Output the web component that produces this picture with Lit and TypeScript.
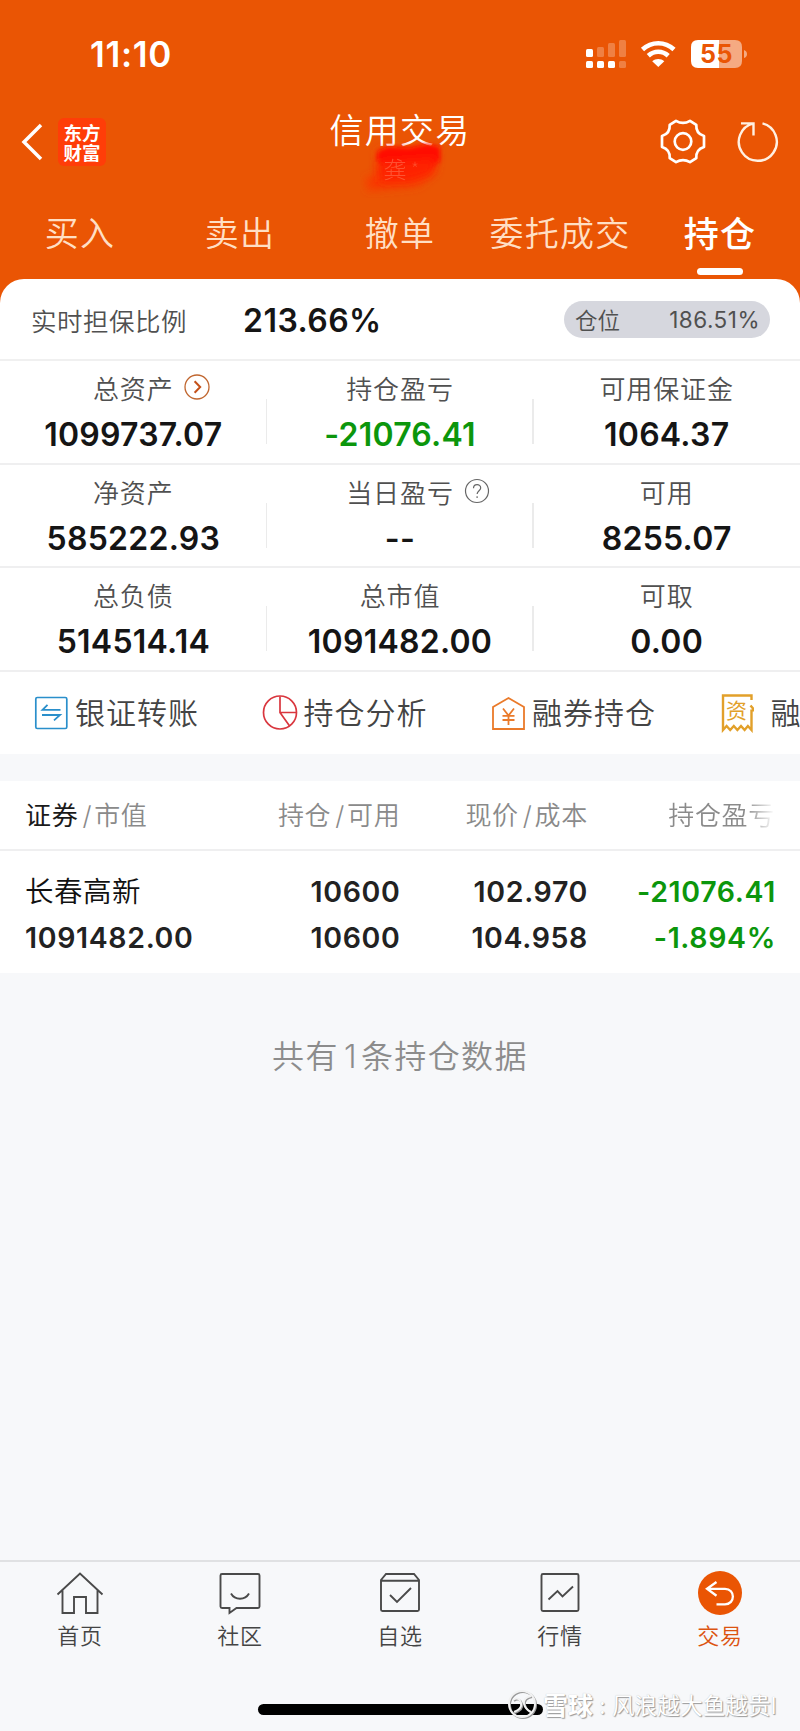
import { LitElement, html, css, svg } from "lit";
import { customElement } from "lit/decorators.js";
import { classMap } from "lit/directives/class-map.js";

const TABS = ["买入", "卖出", "撤单", "委托成交", "持仓"];

type Metric = { label: string; value: string; hint?: "go" | "help"; loss?: boolean };
const METRICS: Metric[][] = [
  [
    { label: "总资产", value: "1099737.07", hint: "go" },
    { label: "持仓盈亏", value: "-21076.41", loss: true },
    { label: "可用保证金", value: "1064.37" },
  ],
  [
    { label: "净资产", value: "585222.93" },
    { label: "当日盈亏", value: "--", hint: "help" },
    { label: "可用", value: "8255.07" },
  ],
  [
    { label: "总负债", value: "514514.14" },
    { label: "总市值", value: "1091482.00" },
    { label: "可取", value: "0.00" },
  ],
];

const goIcon = svg`<svg width="26" height="26" viewBox="0 0 26 26" fill="none" stroke="#c0662f">
  <circle cx="13" cy="13" r="12" stroke-width="1.3"/>
  <path d="M10.600 7.200 16.200 13l-5.600 5.800" stroke="#c4511a" stroke-width="2"/></svg>`;
const helpIcon = svg`<svg width="26" height="26" viewBox="0 0 26 26" fill="none" stroke="#666" stroke-width="1.200">
  <circle cx="13" cy="13" r="11.500"/>
  <path d="M9.500 10.200c0-4.800 7.200-4.800 7.200-.3 0 2.700-3.600 3-3.600 6.200M13.100 18.200v1.700"/></svg>`;

const transferIcon = svg`<svg width="35" height="36" viewBox="-1 0 35 36" fill="none" stroke="#2a8fcb">
  <rect x="1.800" y="2.500" width="31" height="31" rx="1.500" stroke-width="1.700"/>
  <path d="M26.500 14.800H8.500l5-5M8 20h18l-6 5.300" stroke-width="1.800"/></svg>`;
const pieIcon = svg`<svg width="36" height="36" viewBox="0 0 36 36" fill="none" stroke="#d9363e" stroke-width="1.700">
  <circle cx="18" cy="17.500" r="16.500"/><path d="M18 1.500v16h16.500M18 17.500l9.600 13.600"/></svg>`;
const houseIcon = svg`<svg width="35" height="36" viewBox="-1.500 0 35 36" fill="none" stroke="#ea7a2a" stroke-width="1.800">
  <path d="M1.500 12 17 3l15.500 9v22h-31z"/>
  <path d="m11.500 13.500 5.500 7 5.500-7M17 20.500V30M11 20.900h12M11 25h12"/></svg>`;
const billIcon = svg`<svg width="35" height="40" viewBox="-1 0 35 40" fill="none" stroke="#e2a02a" stroke-width="2.400">
  <path d="M31.500 7V2.500H3V37l3.600-4 3.600 4 3.600-4 3.600 4 3.600-4 3.600 4 3.300-4 3.600 4V16.500M30.500 12.500l2.500 3v3"/>
  <text x="17" y="25" text-anchor="middle" class="bill">资</text></svg>`;

const LINKS = [
  { icon: transferIcon, label: "银证转账" },
  { icon: pieIcon, label: "持仓分析" },
  { icon: houseIcon, label: "融券持仓" },
  { icon: billIcon, label: "融资持仓", wide: true },
];

const NAV = [
  { label: "首页", icon: svg`<path d="M1.500 23.500 24 2.500l22.500 21M6.500 19.500V42H18V26h12v16h11.500V19.500"/>` },
  { label: "社区", icon: svg`<path d="M6 3h36q1.500 0 1.500 1.500v31q0 1.500-1.500 1.500H20.500l-7 5v-5H6q-1.500 0-1.500-1.500v-31Q4.500 3 6 3zM15 22.500c4 7 14 7 18 0"/>` },
  { label: "自选", icon: svg`<path d="M10 3h28l5 6v29.500q0 1.500-1.500 1.500h-35Q5 40 5 38.500V9zM5 9.800h38M14 24l7 7 14-14"/>` },
  { label: "行情", icon: svg`<rect x="5.500" y="3" width="37" height="37" rx="1.500"/><path d="m12.500 28.500 9-8.500 5 5.500 10.500-10"/>` },
];

@customElement("status-bar")
class StatusBar extends LitElement {
  static styles = css`
    :host { display: flex; height: 107px; margin-bottom: -1px; align-items: center; justify-content: space-between; padding: 0 53px 0 90px; color: #fff; }
    .time { font-size: 35px; font-weight: 600; letter-spacing: 0.700px; }
    .pct { font: 700 25px Inter, sans-serif; fill: #ea5504; letter-spacing: 0.600px; }
  `;
  render() {
    return html`<span class="time">11:10</span>
      <svg width="162" height="34" viewBox="0 0 162 34" fill="#fff">
        <rect x="1" y="12" width="7" height="8" rx="1.500"/>
        <g opacity=".25"><rect x="12" y="10" width="7" height="10" rx="1.500"/><rect x="23" y="6" width="7" height="14" rx="1.500"/><rect x="34" y="3" width="7" height="17" rx="1.500"/><rect x="34" y="24" width="7" height="7" rx="1.500"/></g>
        <rect x="1" y="24" width="7" height="7" rx="1.500"/><rect x="12" y="24" width="7" height="7" rx="1.500"/><rect x="23" y="24" width="7" height="7" rx="1.500"/>
        <g fill="none" stroke="#fff" stroke-width="4.600"><path d="M57.500 12.500c9-8.400 22.500-8.400 31.500 0"/><path d="M63.300 18.700c5.800-5.300 14.100-5.300 19.900 0"/></g>
        <path d="M67.200 24.300c3.400-3 8.700-3 12.100 0l-6 5.800z"/>
        <path d="M113 3h21v28h-21q-7 0-7-7V10q0-7 7-7z"/>
        <path opacity=".5" d="M134 3h16q7 0 7 7v14q0 7-7 7h-16zM159 13q3 1 3 4t-3 4z"/>
        <text x="131.500" y="26" text-anchor="middle" class="pct">55</text>
      </svg>`;
  }
}

@customElement("title-bar")
class TitleBar extends LitElement {
  static styles = css`
    :host { display: grid; grid-template-columns: 1fr auto 1fr; height: 72px; align-items: center; color: #fff; }
    .left { display: flex; align-items: center; padding-left: 20px; gap: 14px; }
    .logo { display: grid; grid-auto-rows: 20.500px; place-content: center; width: 48px; height: 48px; border-radius: 6px; background: #ff3d08; font: 700 18.500px/20.500px "Noto Sans CJK SC", sans-serif; text-align: center; }
    .mid { position: relative; height: 72px; }
    .title { font-size: 34px; font-weight: 350; letter-spacing: 1.200px; line-height: 46px; padding-top: 2px; display: block; }
    .smear { position: absolute; left: 30px; top: 28px; }
    .masked { font: 300 23px "Noto Sans CJK SC", sans-serif; fill: #ff7a5a; }
    .star { font-size: 18px; }
    .right { display: flex; justify-content: flex-end; gap: 30px; padding-right: 20.500px; align-items: center; }
  `;
  render() {
    return html`<div class="left">
        <svg width="24" height="40" viewBox="0 0 24 40" fill="none" stroke="#fff" stroke-width="3.500"><path d="M21 3 4 20l17 17"/></svg>
        <div class="logo"><span>东方</span><span>财富</span></div>
      </div>
      <div class="mid">
        <span class="title">信用交易</span>
        <svg class="smear" width="90" height="64" viewBox="0 0 90 64">
          <defs>
            <filter id="soft" x="-20%" y="-40%" width="140%" height="180%"><feGaussianBlur stdDeviation="2.200"/></filter>
            <filter id="softer" x="-20%" y="-40%" width="140%" height="180%"><feGaussianBlur stdDeviation="4"/></filter>
          </defs>
          <path d="M18 16 78 14l-2 24-18 14-50 5-3-12 12-5z" fill="#f83a03" filter="url(#softer)"/>
          <path d="M18 17 28 13 50 14 68 10l12 3 0 14-10 6-22 3-23-3-8-8z" fill="#ff0c02" filter="url(#soft)"/>
          <path d="M18 28 76 24 71 40 50 47 20 48z" fill="#fe2204" filter="url(#softer)"/>
          <text x="23.500" y="44" class="masked" opacity=".55">龚</text>
          <text x="51" y="42" class="masked star" opacity=".45">*</text>
        </svg>
      </div>
      <div class="right">
        <svg width="46" height="46" viewBox="0 0 46 46" fill="none" stroke="#fff" stroke-width="2.700" stroke-linejoin="round">
          <path d="M16 1.800q7 4.200 14 0l6.300 4q-.6 8.700 7.700 11.200v11q-8.300 2.500-7.700 11.200l-6.300 4q-7-4.200-14 0l-6.300-4Q10.300 30.500 2 28V17Q10.300 14.500 9.700 5.800z"/>
          <circle cx="23" cy="22.500" r="8.300"/></svg>
        <svg width="44" height="46" viewBox="0 0 44 46" fill="none" stroke="#fff0e2" stroke-width="2.400">
          <path d="M26.500 4.400A19 19 0 1 1 17.500 4.300M5 4.400h12.500V16.500"/></svg>
      </div>`;
  }
}

@customElement("trade-tabs")
class TradeTabs extends LitElement {
  static styles = css`
    :host { display: grid; grid-template-columns: repeat(5, 160px); height: 101px; color: #ffdfc4; }
    .tab { display: flex; flex-direction: column; align-items: center; padding-top: 31px; font-size: 34px; line-height: 50px; letter-spacing: 1.200px; font-weight: 350; }
    .on { color: #fff; font-weight: 500; font-size: 35px; }
    .bar { width: 46px; height: 7px; border-radius: 4px; background: #fff; margin-top: 9px; }
  `;
  render() {
    return html`${TABS.map((t, i) => {
      const on = i === TABS.length - 1;
      return html`<div class=${classMap({ tab: true, on })}>${t}${on ? html`<i class="bar"></i>` : ""}</div>`;
    })}`;
  }
}

@customElement("account-summary")
class AccountSummary extends LitElement {
  static styles = css`
    :host { display: block; background: #fff; border-radius: 24px 24px 0 0; color: #505050; font-weight: 350; }
    .ratio { display: flex; align-items: center; height: 80px; border-bottom: 2px solid #f0f0f0; padding: 0 30px 0 31px; }
    .name { font-size: 25.500px; letter-spacing: 0.500px; }
    .big { font-size: 32px; font-weight: 600; color: #151515; margin-left: 56px; letter-spacing: 0.450px; padding-top: 3px; }
    .pill { margin-left: auto; display: flex; justify-content: space-between; align-items: center; box-sizing: border-box; width: 206px; height: 37px; border-radius: 19px; background: #d6d7de; padding: 0 10px 0 11px; font-size: 22.500px; }
    .pct { font-weight: 400; letter-spacing: 0.500px; }
    .row { display: grid; grid-template-columns: 1fr 1fr 1fr; height: 101.700px; border-bottom: 2px solid #efeff0; }
    .cell { position: relative; display: flex; flex-direction: column; align-items: center; padding-top: 9px; }
    .cell + .cell::before { content: ""; position: absolute; left: -1px; top: 38px; height: 45px; width: 1.500px; background: #ebebeb; }
    .label { position: relative; font-size: 26px; line-height: 40px; letter-spacing: 0.900px; }
    .hint { position: absolute; left: 100%; top: 4px; margin-left: 10px; height: 26px; line-height: 0; }
    .value { font-size: 32px; line-height: 40px; margin-top: 5px; font-weight: 600; color: #151515; letter-spacing: 0.250px; }
    .loss { color: #0c960c; }
  `;
  render() {
    return html`<div class="ratio"><span class="name">实时担保比例</span><span class="big">213.66%</span>
        <span class="pill"><span>仓位</span><span class="pct">186.51%</span></span></div>
      ${METRICS.map((row) => html`<div class="row">${row.map((m) => html`<div class="cell">
        <span class="label">${m.label}${m.hint ? html`<span class="hint">${m.hint === "go" ? goIcon : helpIcon}</span>` : ""}</span>
        <span class=${classMap({ value: true, loss: !!m.loss })}>${m.value}</span></div>`)}</div>`)}`;
  }
}

@customElement("quick-links")
class QuickLinks extends LitElement {
  static styles = css`
    :host { display: flex; height: 82px; background: #fff; overflow: hidden; color: #444; }
    .link { flex: 0 0 228.500px; display: flex; align-items: center; height: 82px; padding-left: 33px; box-sizing: border-box; font-size: 30px; font-weight: 350; letter-spacing: 1px; line-height: 44px; white-space: nowrap; }
    .ico { display: flex; flex: 0 0 42px; }
    .wide .ico { flex-basis: 52px; }
    .text { padding-bottom: 1px; }
    .bill { font: 400 21px "Noto Sans CJK SC", sans-serif; fill: #e2a02a; stroke: none; }
  `;
  render() {
    return html`${LINKS.map((l) => html`<div class=${classMap({ link: true, wide: !!l.wide })}><span class="ico">${l.icon}</span><span class="text">${l.label}</span></div>`)}`;
  }
}

@customElement("holdings-table")
class HoldingsTable extends LitElement {
  static styles = css`
    :host { display: block; margin-top: 27px; background: #fff; }
    .row { display: grid; grid-template-columns: 215.500px 160px 187.500px 188px; padding: 0 24px 0 25px; text-align: right; }
    .row > :first-child { text-align: left; }
    .head { height: 68px; line-height: 69px; font-size: 26px; font-weight: 350; color: #8a8a8a; letter-spacing: 0.700px; border-bottom: 2px solid #efeff0; white-space: nowrap; }
    .sec { color: #1a1a1a; font-weight: 400; }
    .sl { padding: 0 2px 0 4px; }
    .fade { background: linear-gradient(90deg, #8a8a8a 72%, #fff 100%); background-clip: text; -webkit-background-clip: text; color: transparent; overflow: hidden; justify-self: end; margin-right: 1px; }
    .item { padding-top: 18px; padding-bottom: 11.500px; line-height: 46px; font-size: 28.500px; font-weight: 570; letter-spacing: 0.650px; color: #222; }
    .stock { font-size: 28.500px; font-weight: 350; color: #111; letter-spacing: 0.500px; }
    .loss { color: #0c960c; }
    .line { display: block; height: 46px; }
  `;
  render() {
    return html`<div class="row head">
        <div><span class="sec">证券</span><span class="sl">/</span>市值</div>
        <div>持仓<span class="sl">/</span>可用</div>
        <div>现价<span class="sl">/</span>成本</div>
        <div class="fade">持仓盈亏</div>
      </div>
      <div class="row item">
        <div><span class="line stock">长春高新</span><span class="line">1091482.00</span></div>
        <div><span class="line">10600</span><span class="line">10600</span></div>
        <div><span class="line">102.970</span><span class="line">104.958</span></div>
        <div class="loss"><span class="line">-21076.41</span><span class="line">-1.894%</span></div>
      </div>`;
  }
}

@customElement("bottom-nav")
class BottomNav extends LitElement {
  static styles = css`
    :host { display: grid; grid-template-columns: repeat(5, 160px); height: 135px; border-top: 2px solid #e0e1e3; color: #444; }
    .item { display: flex; flex-direction: column; align-items: center; padding-top: 9px; font-size: 22px; line-height: 34px; font-weight: 350; letter-spacing: 0.800px; gap: 2px; }
    .on { color: #dc5410; }
  `;
  render() {
    return html`${NAV.map((n) => html`<div class="item"><svg width="48" height="46" viewBox="0 0 48 46" fill="none" stroke="#4a4a4a" stroke-width="1.900">${n.icon}</svg>${n.label}</div>`)}
      <div class="item on"><svg width="48" height="46" viewBox="0 0 48 46" fill="none" stroke="#fff" stroke-width="2.300">
        <circle cx="24" cy="22" r="22" fill="#ea5504" stroke="none"/><path d="m20.500 11-9.500 6.800 9.500 7M11.500 17.800H29c10.500 0 10.500 15.500 0 15.500h-8.500"/></svg>交易</div>`;
  }
}

@customElement("app-root")
class AppRoot extends LitElement {
  static styles = css`
    :host { display: flex; flex-direction: column; width: 800px; height: 1731px; background: #f7f8fa; overflow: hidden; position: relative; font-family: Inter, "Noto Sans CJK SC", sans-serif; }
    .top { background: #ea5504; }
    .empty { flex: 1; text-align: center; color: #8c8c8c; font-size: 32px; font-weight: 350; line-height: 50px; padding-top: 59px; letter-spacing: 1.400px; }
    .count { margin: 0 3px 0 5px; }
    .home { display: flex; justify-content: center; height: 34px; padding-top: 7px; box-sizing: border-box; }
    .pill { width: 285px; height: 11px; border-radius: 6px; background: #000; }
    .mark { position: absolute; left: 507px; top: 1689px; display: flex; align-items: center; gap: 6px; height: 30px; color: #fff; font-size: 22.700px; white-space: nowrap; text-shadow: 1px 1px 1px #999, 0 0 1px #bbb; }
    .brand { font-weight: 700; font-size: 25px; }
    .ball { filter: drop-shadow(1px 1px 0.500px #999); }
  `;
  render() {
    return html`<div class="top"><status-bar></status-bar><title-bar></title-bar><trade-tabs></trade-tabs><account-summary></account-summary></div>
      <quick-links></quick-links>
      <holdings-table></holdings-table>
      <div class="empty">共有<span class="count">1</span>条持仓数据</div>
      <bottom-nav></bottom-nav>
      <div class="home"><i class="pill"></i></div>
      <div class="mark"><svg class="ball" width="30" height="30" viewBox="0 0 30 30" fill="none" stroke="#f2f2f2" stroke-width="2"><circle cx="15" cy="15" r="13"/><path d="M6 11c4-3 7-1 8 3s-2 7-7 9M24 7c-5 1-8 4-7 8s3 6 7 8"/></svg><span class="brand">雪球</span><span>: 风浪越大鱼越贵l</span></div>`;
  }
}
